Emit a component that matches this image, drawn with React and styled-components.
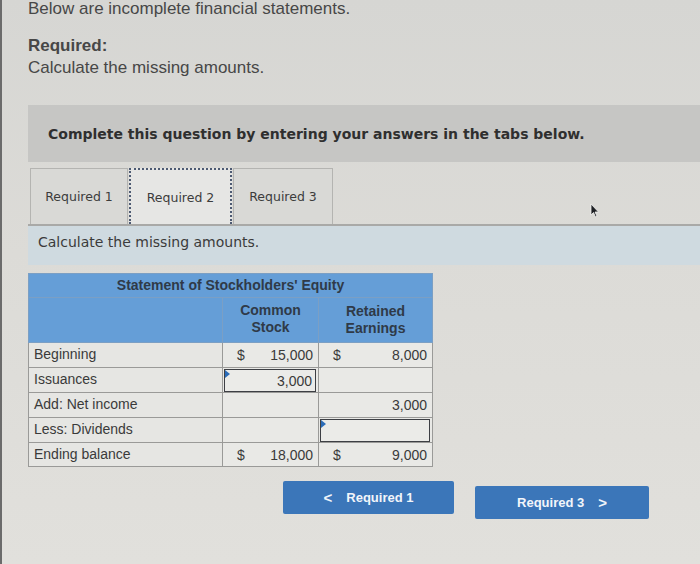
import React from 'react'
import styled, { createGlobalStyle } from 'styled-components'

const GlobalStyle = createGlobalStyle`
  html, body {
    margin: 0;
    padding: 0;
    overflow: hidden;
  }
  body {
    background: linear-gradient(180deg, #d6d6d3 0%, #dcdbd7 45%, #e1e0dc 100%);
    font-family: "Liberation Sans", Arial, sans-serif;
  }
`;

const Page = styled.div`
  width: 700px;
  height: 564px;
  box-sizing: border-box;
  border-left: 2px solid #6b6b6b;
  padding-left: 26px;
  display: flex;
  flex-direction: column;
`;

const Intro = styled.div`
  color: #474747;
  font-size: 17px;
  line-height: 22px;
  margin-top: -2px;
`;

const Strong = styled.div`
  font-weight: bold;
  margin-top: 15px;
`;

const Banner = styled.div`
  margin-top: 26px;
  height: 57px;
  background: #c6c6c4;
  display: flex;
  align-items: center;
  padding-left: 20px;
  font-family: "DejaVu Sans", Verdana, sans-serif;
  font-weight: bold;
  font-size: 14px;
  color: #2f2f2f;
`;

const TabBar = styled.div`
  margin-top: 6px;
  display: flex;
  align-items: flex-end;
  border-bottom: 2px solid #a9a9a7;
  padding-left: 2px;
`;

const Tab = styled.div`
  width: ${({ w }) => w}px;
  height: 56px;
  box-sizing: border-box;
  display: flex;
  align-items: center;
  justify-content: center;
  font-family: "DejaVu Sans", Verdana, sans-serif;
  font-size: 12.5px;
  color: #3c3c3c;
  background: ${({ active }) => (active ? '#e6e6e4' : '#d9d9d6')};
  border: ${({ active }) => (active ? '2px dotted #4d5a72' : '1px solid #b4b4b1')};
  border-bottom: none;
  margin-right: 1px;
`;

const Panel = styled.div`
  height: 39px;
  box-sizing: border-box;
  background: #cfdae0;
  display: flex;
  align-items: flex-start;
  padding: 8px 0 0 10px;
  font-family: "DejaVu Sans", Verdana, sans-serif;
  font-size: 14px;
  color: #3b3b3b;
`;

const Table = styled.table`
  margin-top: 8px;
  border-collapse: collapse;
  width: 404px;
  table-layout: fixed;
  font-size: 14px;
  line-height: 16px;
  color: #3a3a3a;
`;

const HeadCell = styled.th`
  background: #659ed7;
  border: 1px solid #7b9fc4;
  font-weight: bold;
  color: #2f3a48;
  font-size: 14px;
  line-height: 17px;
  padding: ${({ top }) => (top ? '4px 0 0' : '0')};
  height: ${({ h }) => h}px;
  text-align: center;
  vertical-align: ${({ top }) => (top ? 'top' : 'middle')};
`;

const Label = styled.td`
  background: #e6e6e3;
  border: 1px solid #9a9a98;
  padding: 0 5px 2px;
  height: ${({ h }) => h || 22}px;
  white-space: nowrap;
`;

const Cell = styled.td`
  background: #e9e9e6;
  border: 1px solid #9a9a98;
  padding: 0 5px 0 14px;
  height: ${({ h }) => h || 22}px;
  position: relative;
`;

const Amount = styled.div`
  display: flex;
  justify-content: space-between;
  align-items: center;
`;

const Input = styled.div`
  position: absolute;
  inset: 1px 2px 0 1px;
  border: 1.5px solid #3d3f44;
  background: #ebebe8;
  display: flex;
  align-items: center;
  justify-content: flex-end;
  padding-right: 3px;
  &::before {
    content: '';
    position: absolute;
    left: 0;
    top: 0;
    border-top: 4px solid transparent;
    border-bottom: 4px solid transparent;
    border-left: 5px solid #2b6cb8;
  }
`;

const Buttons = styled.div`
  margin-top: 14px;
  display: flex;
  gap: 21px;
  padding-left: 255px;
`;

const NavButton = styled.div`
  width: ${({ w }) => w}px;
  height: 33px;
  margin-top: ${({ drop }) => drop || 0}px;
  background: #3b76b9;
  border-radius: 2px;
  color: #f2f5fa;
  font-size: 13px;
  font-weight: bold;
  display: flex;
  align-items: center;
  justify-content: center;
  gap: 14px;
`;

const Chevron = styled.span`
  font-size: 15px;
  font-weight: bold;
`;

const Cursor = styled.svg`
  position: absolute;
  left: 590px;
  top: 203px;
`;

export default function App() {
  return (
    <>
      <GlobalStyle />
      <Page>
        <Intro>
          Below are incomplete financial statements.
          <Strong>Required:</Strong>
          Calculate the missing amounts.
        </Intro>
        <Banner>Complete this question by entering your answers in the tabs below.</Banner>
        <TabBar>
          <Tab w={98}>Required 1</Tab>
          <Tab w={103} active>Required 2</Tab>
          <Tab w={100}>Required 3</Tab>
        </TabBar>
        <Panel>Calculate the missing amounts.</Panel>
        <Table>
          <colgroup>
            <col style={{ width: 194 }} />
            <col style={{ width: 96 }} />
            <col style={{ width: 114 }} />
          </colgroup>
          <thead>
            <tr>
              <HeadCell colSpan={3} h={23}>Statement of Stockholders' Equity</HeadCell>
            </tr>
            <tr>
              <HeadCell h={44} />
              <HeadCell h={40} top>Common<br />Stock</HeadCell>
              <HeadCell h={44}>Retained<br />Earnings</HeadCell>
            </tr>
          </thead>
          <tbody>
            <tr>
              <Label>Beginning</Label>
              <Cell><Amount><span>$</span><span>15,000</span></Amount></Cell>
              <Cell><Amount><span>$</span><span>8,000</span></Amount></Cell>
            </tr>
            <tr>
              <Label>Issuances</Label>
              <Cell><Input>3,000</Input></Cell>
              <Cell />
            </tr>
            <tr>
              <Label>Add: Net income</Label>
              <Cell />
              <Cell><Amount><span /><span>3,000</span></Amount></Cell>
            </tr>
            <tr>
              <Label>Less: Dividends</Label>
              <Cell />
              <Cell><Input /></Cell>
            </tr>
            <tr>
              <Label h={21}>Ending balance</Label>
              <Cell h={21}><Amount><span>$</span><span>18,000</span></Amount></Cell>
              <Cell h={21}><Amount><span>$</span><span>9,000</span></Amount></Cell>
            </tr>
          </tbody>
        </Table>
        <Buttons>
          <NavButton w={171}><Chevron>&lt;</Chevron>Required 1</NavButton>
          <NavButton w={174} drop={5}>Required 3<Chevron>&gt;</Chevron></NavButton>
        </Buttons>
      </Page>
      <Cursor width="10" height="16" viewBox="0 0 10 16">
        <path d="M1 1 L1 12 L3.5 9.5 L5.5 14 L7 13.3 L5 9 L8.5 9 Z" fill="#1e2024" stroke="#f4f4f2" strokeWidth="0.8" />
      </Cursor>
    </>
  )
}
